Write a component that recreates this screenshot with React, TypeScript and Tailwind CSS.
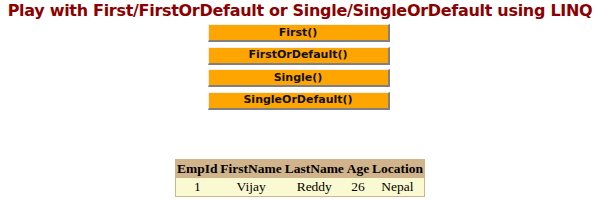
const methods = ["First()", "FirstOrDefault()", "Single()", "SingleOrDefault()"];

const employees = [{ id: 1, first: "Vijay", last: "Reddy", age: 26, location: "Nepal" }];

export default function App() {
  return (
    <div className="w-[600px] h-[201px] bg-white font-['DejaVu_Sans',Verdana,sans-serif]">
      <h3 className="text-center text-[16px] font-bold leading-[22px] text-[#8b0000] tracking-[-0.3px]">
        Play with First/FirstOrDefault or Single/SingleOrDefault using LINQ
      </h3>
      <div className="flex flex-col items-center gap-[4.5px] mt-[2px] pr-[3px]">
        {methods.map((m) => (
          <button
            key={m}
            className="w-[182px] h-[18px] bg-[#ffa500] border-t border-l border-t-[#f0f0f0] border-l-[#f0f0f0] border-r-2 border-b-2 border-r-[#808080] border-b-[#808080] text-[11px] font-bold leading-[14px] text-[#111]"
          >
            {m}
          </button>
        ))}
      </div>
      <div className="flex justify-center mt-[49px]">
        <table className="border-collapse font-['Liberation_Serif',serif] text-[13.5px] border border-[#d2b48c]">
          <thead>
            <tr className="bg-[#d2b48c]">
              <th className="px-[1.4px] h-[18px] leading-[18px]">EmpId</th>
              <th className="px-[1.4px] leading-[18px]">FirstName</th>
              <th className="px-[1.4px] leading-[18px]">LastName</th>
              <th className="px-[1.4px] leading-[18px]">Age</th>
              <th className="px-[1.4px] leading-[18px]">Location</th>
            </tr>
          </thead>
          <tbody>
            {employees.map((e) => (
              <tr key={e.id} className="bg-[#fafad2] text-center">
                <td className="px-[1.4px] leading-[18px]">{e.id}</td>
                <td className="px-[1.4px] leading-[18px]">{e.first}</td>
                <td className="px-[1.4px] leading-[18px]">{e.last}</td>
                <td className="px-[1.4px] leading-[18px]">{e.age}</td>
                <td className="px-[1.4px] leading-[18px]">{e.location}</td>
              </tr>
            ))}
          </tbody>
        </table>
      </div>
    </div>
  );
}
